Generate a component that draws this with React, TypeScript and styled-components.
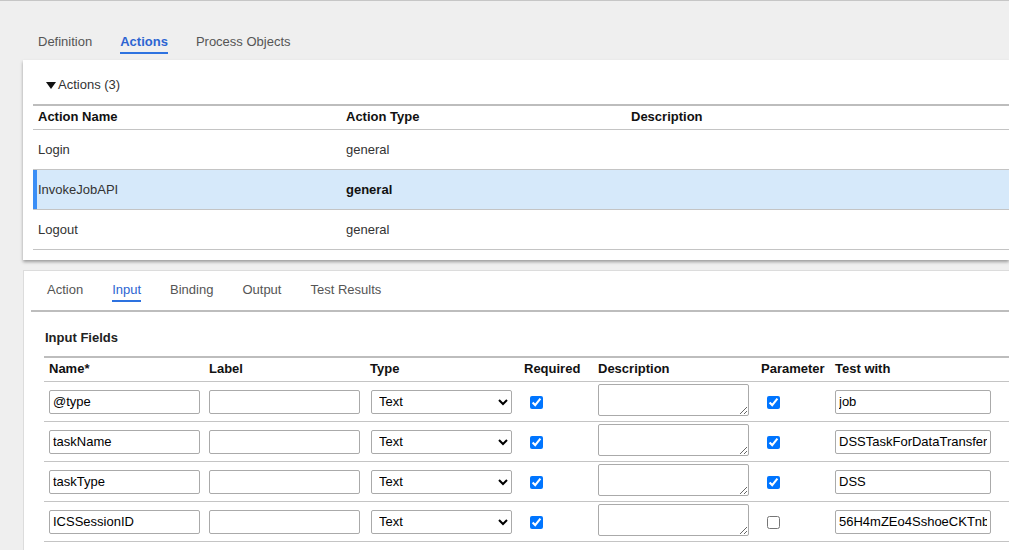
import styled, {createGlobalStyle} from 'styled-components'

const GlobalStyle = createGlobalStyle`
    html, body {
        margin: 0;
        padding: 0;
        background: #efefef;
        font-family: "Liberation Sans", Arial, sans-serif;
        font-size: 13px;
        color: #333;
        overflow: hidden;
    }
`

const actions = [
    {name: 'Login', type: 'general', selected: false},
    {name: 'InvokeJobAPI', type: 'general', selected: true},
    {name: 'Logout', type: 'general', selected: false},
]

const fields = [
    {name: '@type', test: 'job', param: true},
    {name: 'taskName', test: 'DSSTaskForDataTransfer', param: true},
    {name: 'taskType', test: 'DSS', param: true},
    {name: 'ICSSessionID', test: '56H4mZEo4SshoeCKTnb', param: false},
]

export default function App() {
    return (
        <Page>
            <GlobalStyle/>
            <TopTabs>
                <Tab>Definition</Tab>
                <Tab $active $bold>Actions</Tab>
                <Tab>Process Objects</Tab>
            </TopTabs>

            <ActionsPanel>
                <Summary>
                    <Caret/>
                    Actions (3)
                </Summary>
                <Table>
                    <colgroup>
                        <col style={{width: 308}}/>
                        <col style={{width: 285}}/>
                        <col/>
                    </colgroup>
                    <thead>
                    <tr>
                        <HeadCell>Action Name</HeadCell>
                        <HeadCell>Action Type</HeadCell>
                        <HeadCell>Description</HeadCell>
                    </tr>
                    </thead>
                    <tbody>
                    {actions.map((a) => (
                        <ActionRow key={a.name} $selected={a.selected}>
                            <ActionCell>{a.name}</ActionCell>
                            <ActionCell $bold={a.selected}>{a.type}</ActionCell>
                            <ActionCell/>
                        </ActionRow>
                    ))}
                    </tbody>
                </Table>
            </ActionsPanel>

            <DetailPanel>
                <SubTabs>
                    <Tab>Action</Tab>
                    <Tab $active>Input</Tab>
                    <Tab>Binding</Tab>
                    <Tab>Output</Tab>
                    <Tab>Test Results</Tab>
                </SubTabs>
                <Content>
                    <SectionTitle>Input Fields</SectionTitle>
                    <Table>
                        <colgroup>
                            <col style={{width: 160}}/>
                            <col style={{width: 161}}/>
                            <col style={{width: 154}}/>
                            <col style={{width: 74}}/>
                            <col style={{width: 163}}/>
                            <col style={{width: 74}}/>
                            <col/>
                        </colgroup>
                        <thead>
                        <tr>
                            <HeadCell>Name*</HeadCell>
                            <HeadCell>Label</HeadCell>
                            <HeadCell>Type</HeadCell>
                            <HeadCell>Required</HeadCell>
                            <HeadCell>Description</HeadCell>
                            <HeadCell>Parameter</HeadCell>
                            <HeadCell>Test with</HeadCell>
                        </tr>
                        </thead>
                        <tbody>
                        {fields.map((f) => (
                            <tr key={f.name}>
                                <FieldCell><TextInput defaultValue={f.name}/></FieldCell>
                                <FieldCell><TextInput defaultValue=""/></FieldCell>
                                <FieldCell>
                                    <Select defaultValue="Text">
                                        <option>Text</option>
                                        <option>Number</option>
                                    </Select>
                                </FieldCell>
                                <FieldCell><Check type="checkbox" defaultChecked/></FieldCell>
                                <FieldCell><TextArea/></FieldCell>
                                <FieldCell><Check type="checkbox" defaultChecked={f.param}/></FieldCell>
                                <FieldCell><TestInput defaultValue={f.test}/></FieldCell>
                            </tr>
                        ))}
                        </tbody>
                    </Table>
                </Content>
            </DetailPanel>
        </Page>
    )
}

const Page = styled.div`
    height: 550px;
    border-top: 1px solid #c6c6c6;
    box-sizing: border-box;
`

const TopTabs = styled.nav`
    display: flex;
    gap: 28px;
    height: 59px;
    padding-left: 38px;
    padding-top: 33px;
    box-sizing: border-box;
`

const Tab = styled.div<{ $active?: boolean; $bold?: boolean }>`
    height: 20px;
    line-height: 16px;
    padding-bottom: 2px;
    box-sizing: border-box;
    border-bottom: 2px solid ${({$active}) => ($active ? '#2d72e0' : 'transparent')};
    color: ${({$active}) => ($active ? '#2c64d2' : '#555')};
    font-weight: ${({$bold}) => ($bold ? 700 : 400)};
    white-space: nowrap;
`

const ActionsPanel = styled.section`
    margin-left: 23px;
    height: 200px;
    padding-left: 10px;
    background: #fff;
    box-shadow: 0 2px 3px rgba(0, 0, 0, 0.35);
`

const Summary = styled.div`
    display: flex;
    align-items: center;
    gap: 2px;
    padding: 17px 0 11px 13px;
    line-height: 16px;
    color: #333;
`

const Caret = styled.span`
    width: 0;
    height: 0;
    border-left: 5.5px solid transparent;
    border-right: 5.5px solid transparent;
    border-top: 7px solid #111;
    margin-top: 1px;
`

const Table = styled.table`
    width: 100%;
    table-layout: fixed;
    border-collapse: separate;
    border-spacing: 0;
    border-top: 2px solid #bdbdbd;
`

const HeadCell = styled.th`
    text-align: left;
    font-weight: 700;
    color: #111;
    padding: 2px 5px 4px;
    line-height: 17px;
    border-bottom: 1px solid #c4c4c4;
    white-space: nowrap;
`

const ActionRow = styled.tr<{ $selected: boolean }>`
    background: ${({$selected}) => ($selected ? '#d6e9fa' : '#fff')};

    td:first-child {
        box-shadow: ${({$selected}) => ($selected ? 'inset 4px 0 0 #3a8ef6' : 'none')};
    }
`

const ActionCell = styled.td<{ $bold?: boolean }>`
    padding: 11px 5px;
    line-height: 17px;
    border-bottom: 1px solid #c4c4c4;
    font-weight: ${({$bold}) => ($bold ? 700 : 400)};
    color: ${({$bold}) => ($bold ? '#111' : '#333')};
`

const DetailPanel = styled.section`
    margin: 10px 0 0 23px;
    height: 300px;
    padding-left: 7px;
    background: #fff;
    border-top: 1px solid #dcdcdc;
    border-left: 1px solid #dcdcdc;
`

const SubTabs = styled.nav`
    display: flex;
    gap: 29px;
    height: 41px;
    padding: 11px 0 0 16px;
    box-sizing: border-box;
    border-bottom: 2px solid #bdbdbd;
`

const Content = styled.div`
    padding-left: 13px;
`

const SectionTitle = styled.h3`
    margin: 18px 0 10px 1px;
    font-size: 13px;
    line-height: 16px;
    font-weight: 700;
    color: #222;
`

const FieldCell = styled.td`
    padding: 2px 5px 5px;
    height: 32px;
    vertical-align: middle;
    border-bottom: 1px solid #c4c4c4;
`

const inputBase = `
    display: block;
    box-sizing: border-box;
    height: 24px;
    border: 1px solid #aaa;
    border-radius: 2px;
    background: #fff;
    font-family: "Liberation Sans", Arial, sans-serif;
    font-size: 13px;
    color: #000;
    outline: none;
`

const TextInput = styled.input`
    ${inputBase};
    width: 151px;
    padding: 1px 3px;
    margin-top: 3px;
`

const TestInput = styled.input`
    ${inputBase};
    width: 156px;
    padding: 1px 3px;
    margin-top: 3px;
`

const Select = styled.select`
    ${inputBase};
    width: 141px;
    padding: 0 3px;
    margin: 3px 0 0 1px;
`

const TextArea = styled.textarea`
    display: block;
    box-sizing: border-box;
    width: 151px;
    height: 32px;
    border: 1px solid #aaa;
    border-radius: 2px;
    margin: 0;
    font-family: "Liberation Sans", Arial, sans-serif;
    font-size: 13px;
`

const Check = styled.input`
    display: block;
    width: 13px;
    height: 13px;
    margin: 4px 0 0 6px;
    accent-color: #0075ff;
`
